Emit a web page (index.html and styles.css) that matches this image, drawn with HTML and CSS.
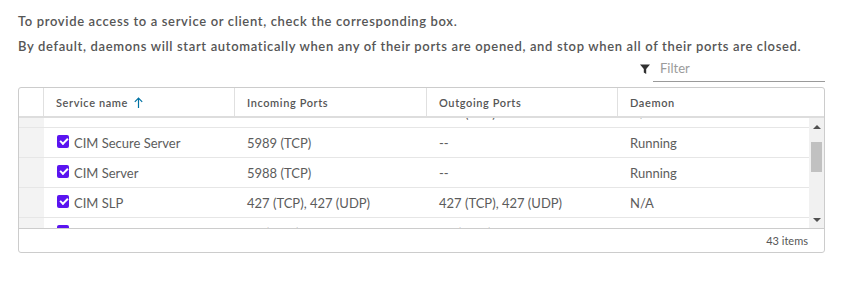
FILE: index.html
```html
<!DOCTYPE html>
<html>
<head>
<meta charset="utf-8">
<link rel="stylesheet" href="styles.css">
</head>
<body>
<div class="page">
  <p class="intro">To provide access to a service or client, check the corresponding box.</p>
  <p class="intro">By default, daemons will start automatically when any of their ports are opened, and stop when all of their ports are closed.</p>
  <div class="filter-row">
    <svg class="funnel" width="10" height="10" viewBox="0 0 10 10"><path d="M0 0.5 H10 L6.2 5 V10 L3.8 8.6 V5 Z" fill="#313131"/></svg>
    <div class="filter-input">Filter</div>
  </div>
  <div class="grid">
    <div class="head">
      <div class="hcell sel"></div>
      <div class="hcell">Service name
        <svg class="sort" width="9" height="11" viewBox="0 0 9 11"><path d="M4.5 11 V1.2 M0.8 4.8 L4.5 1.1 L8.2 4.8" fill="none" stroke="#0072a3" stroke-width="1.2"/></svg>
      </div>
      <div class="hcell">Incoming Ports</div>
      <div class="hcell">Outgoing Ports</div>
      <div class="hcell last">Daemon</div>
    </div>
    <div class="body">
      <div class="viewport">
        <div class="rows">
          <div class="row"><div class="cell sel"></div><div class="cell name"><span class="cb"></span>NFC</div><div class="cell">--</div><div class="cell">427 (TCP)</div><div class="cell">N/A</div></div>
          <div class="row"><div class="cell sel"></div><div class="cell name"><span class="cb"></span>CIM Secure Server</div><div class="cell">5989 (TCP)</div><div class="cell">--</div><div class="cell">Running</div></div>
          <div class="row"><div class="cell sel"></div><div class="cell name"><span class="cb"></span>CIM Server</div><div class="cell">5988 (TCP)</div><div class="cell">--</div><div class="cell">Running</div></div>
          <div class="row"><div class="cell sel"></div><div class="cell name"><span class="cb"></span>CIM SLP</div><div class="cell">427 (TCP), 427 (UDP)</div><div class="cell">427 (TCP), 427 (UDP)</div><div class="cell">N/A</div></div>
          <div class="row"><div class="cell sel"></div><div class="cell name"><span class="cb"></span>DHCP Client</div><div class="cell">68 (UDP)</div><div class="cell">68 (UDP)</div><div class="cell">N/A</div></div>
        </div>
      </div>
      <div class="scrollbar">
        <div class="arrow up"></div>
        <div class="track"><div class="thumb"></div></div>
        <div class="arrow down"></div>
      </div>
    </div>
    <div class="foot">43 items</div>
  </div>
</div>
</body>
</html>
```

FILE: styles.css
```css
* { box-sizing: border-box; }
body {
  margin: 0;
  background: #fff;
  font-family: Lato, "Open Sans", sans-serif;
  color: #565656;
}
.page {
  padding: 9px 24px 0 18px;
}
.intro {
  margin: 0;
  font-size: 13px;
  line-height: 25px;
  font-weight: 600;
  color: #565656;
  letter-spacing: 0.65px;
}
.intro + .intro { margin-bottom: -1px; }
.filter-row {
  display: flex;
  justify-content: flex-end;
  align-items: center;
  height: 24px;
}
.funnel { margin-right: 3px; margin-top: -2px; }
.filter-input {
  width: 172px;
  height: 24px;
  border-bottom: 1px solid #9a9a9a;
  font-size: 13px;
  line-height: 21px;
  color: #9b9b9b;
  padding-left: 7px;
}
.grid {
  margin-top: 5px;
  border: 1px solid #ccc;
  border-radius: 3px;
  overflow: hidden;
}
.head {
  display: grid;
  grid-template-columns: 24px 191px 192px 191px 1fr;
  height: 30px;
  border-bottom: 2px solid #ddd;
}
.hcell {
  display: flex;
  align-items: center;
  padding-left: 12px;
  border-left: 1px solid #e0e0e0;
  font-size: 11px;
  font-weight: 600;
  letter-spacing: 0.6px;
  color: #565656;
}
.hcell.sel { border-left: none; }
.sort { margin-left: 6px; margin-top: 1px; }
.body {
  display: flex;
  height: 110px;
  background: #fff;
}
.viewport {
  flex: 1;
  overflow: hidden;
}
.rows { margin-top: -21px; }
.row {
  display: grid;
  grid-template-columns: 25px 191px 192px 191px 1fr;
  height: 30px;
  border-top: 1px solid #e6e6e6;
}
.cell {
  display: flex;
  align-items: center;
  padding-left: 12px;
  font-size: 13px;
  color: #5c5c5c;
}
.cell.sel { background: #f3f3f3; padding: 0; }
.cell.name { padding-left: 13px; }
.cb {
  width: 12px;
  height: 13px;
  border-radius: 2px;
  background: #5a14f0;
  margin-right: 5px;
  margin-top: -3px;
  position: relative;
}
.cb::after {
  content: "";
  position: absolute;
  left: 3px;
  top: 3px;
  width: 6px;
  height: 3px;
  border-left: 2px solid #fff;
  border-bottom: 2px solid #fff;
  transform: rotate(-45deg);
  transform-origin: center;
}
.scrollbar {
  width: 15px;
  background: #f1f1f1;
  display: flex;
  flex-direction: column;
}
.arrow { height: 17px; display: flex; align-items: center; justify-content: center; }
.arrow.up::before {
  content: "";
  border-left: 4px solid transparent;
  border-right: 4px solid transparent;
  border-bottom: 4px solid #505050;
}
.arrow.down::before {
  content: "";
  border-left: 4px solid transparent;
  border-right: 4px solid transparent;
  border-top: 4px solid #505050;
}
.track { flex: 1; padding: 7px 2px 0 2px; }
.thumb { height: 30px; background: #c1c1c1; }
.foot {
  border-top: 1px solid #ccc;
  height: 24px;
  display: flex;
  align-items: center;
  justify-content: flex-end;
  padding-right: 16px;
  font-size: 11px;
  color: #565656;
}
```
